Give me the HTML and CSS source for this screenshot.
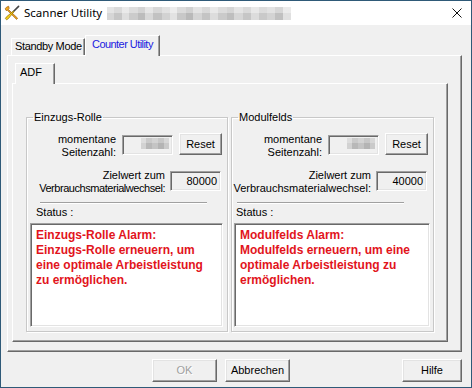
FILE: index.html
```html
<!DOCTYPE html>
<html>
<head>
<meta charset="utf-8">
<link rel="stylesheet" href="styles.css">
</head>
<body>
<div class="window">
  <div class="titlebar">
    <svg class="app-icon" width="16" height="16" viewBox="0 0 16 16">
      <path d="M2.5 2.2 L4.6 1.2 L5.2 3.3 L4.2 4.3 L13.6 13.2 L12.6 14.4 L3.3 5.2 L2.2 5.6 L1.2 3.8 Z" fill="#f2a81d" stroke="#9a5a08" stroke-width="0.7"/>
      <path d="M14.6 1.4 L9.2 6.8" stroke="#444" stroke-width="1.6" stroke-linecap="round"/>
      <path d="M9.4 6.1 L10 6.7 L4.4 13.6 L2.6 14.8 L1.4 13.6 L2.5 11.8 Z" fill="#f7d21c" stroke="#8c6a00" stroke-width="0.7"/>
    </svg>
    <span class="title">Scanner Utility</span>
    <span class="title-blur"></span>
    <svg class="close" width="10" height="10" viewBox="0 0 10 10">
      <path d="M0.5 0.5 L9.5 9.5 M9.5 0.5 L0.5 9.5" stroke="#111" stroke-width="1"/>
    </svg>
  </div>
  <div class="client">
    <div class="tabs outer-tabs">
      <div class="tab tab-standby">Standby Mode</div>
      <div class="tab tab-counter active">Counter Utility</div>
    </div>
    <div class="panel outer-panel">
      <div class="tabs inner-tabs">
        <div class="tab tab-adf active">ADF</div>
      </div>
      <div class="panel inner-panel">
        <fieldset class="group group-left">
          <legend>Einzugs-Rolle</legend>
          <div class="row row-count">
            <div class="labels">momentane<br>Seitenzahl:</div>
            <div class="field field-count"><span class="blur"></span></div>
            <div class="btn btn-reset">Reset</div>
          </div>
          <div class="row row-target">
            <div class="labels">Zielwert zum<br><span class="squeeze">Verbrauchsmaterialwechsel:</span></div>
            <div class="field field-target">80000</div>
          </div>
          <div class="separator"></div>
          <div class="status-label">Status :</div>
          <div class="status-box">Einzugs-Rolle Alarm:<br>Einzugs-Rolle erneuern, um<br>eine optimale Arbeistleistung<br>zu ermöglichen.</div>
        </fieldset>
        <fieldset class="group group-right">
          <legend>Modulfelds</legend>
          <div class="row row-count">
            <div class="labels">momentane<br>Seitenzahl:</div>
            <div class="field field-count"><span class="blur"></span></div>
            <div class="btn btn-reset">Reset</div>
          </div>
          <div class="row row-target">
            <div class="labels">Zielwert zum<br>Verbrauchsmaterialwechsel:</div>
            <div class="field field-target">40000</div>
          </div>
          <div class="separator"></div>
          <div class="status-label">Status :</div>
          <div class="status-box">Modulfelds Alarm:<br>Modulfelds erneuern, um eine<br>optimale Arbeistleistung zu<br>ermöglichen.</div>
        </fieldset>
      </div>
    </div>
    <div class="buttons">
      <div class="btn btn-dlg btn-ok disabled">OK</div>
      <div class="btn btn-dlg btn-cancel">Abbrechen</div>
      <div class="btn btn-dlg btn-help">Hilfe</div>
    </div>
  </div>
</div>
</body>
</html>
```
FILE: styles.css
```css
html, body {
  margin: 0;
  padding: 0;
}
body {
  width: 472px;
  height: 388px;
  overflow: hidden;
  font-family: "Liberation Sans", Arial, sans-serif;
  font-size: 11px;
  color: #000;
}
.window {
  box-sizing: border-box;
  width: 472px;
  height: 388px;
  border: 1px solid #2f5a78;
  background: #f0f0f0;
  display: flex;
  flex-direction: column;
}
.titlebar {
  height: 24px;
  flex: none;
  background: #fff;
  display: flex;
  align-items: center;
}
.app-icon {
  margin-left: 3px;
  flex: none;
}
.title {
  margin-left: 4px;
  font-family: "Noto Sans", sans-serif;
  font-size: 11.5px;
  line-height: 16px;
  color: #000;
}
.title-blur {
  width: 184px;
  height: 13px;
  margin-left: 5px;
  background:
    linear-gradient(180deg, rgba(255,255,255,0.35) 0 6px, rgba(255,255,255,0) 6px 13px),
    linear-gradient(90deg, #d6d6d6 0 7px, #c6c6c6 7px 15px, #dedede 15px 22px, #cbcbcb 22px 31px,
      #bcbcbc 31px 38px, #d8d8d8 38px 46px, #c2c2c2 46px 55px, #d2d2d2 55px 63px, #e2e2e2 63px 70px,
      #c8c8c8 70px 79px, #b9b9b9 79px 86px, #d4d4d4 86px 95px, #c4c4c4 95px 103px, #dcdcdc 103px 111px,
      #cacaca 111px 120px, #bebebe 120px 127px, #d6d6d6 127px 136px, #c6c6c6 136px 144px,
      #dcdcdc 144px 152px, #c9c9c9 152px 160px, #d3d3d3 160px 168px, #c0c0c0 168px 176px, #e0e0e0 176px 184px);
}
.close {
  margin-left: auto;
  margin-right: 9px;
}
.client {
  flex: 1;
  display: flex;
  flex-direction: column;
  padding: 10px 0 0 6px;
}

/* tabs */
.tabs {
  display: flex;
  align-items: flex-end;
  height: 20px;
  flex: none;
}
.tab {
  box-sizing: border-box;
  height: 17px;
  line-height: 13px;
  padding: 1px 0 0 3px;
  border-top: 1px solid #fff;
  border-left: 1px solid #fff;
  border-right: 1px solid #696969;
  box-shadow: inset -1px 0 #a0a0a0;
  background: #f0f0f0;
  white-space: nowrap;
}
.tab.active {
  height: 21px;
  margin-bottom: -1px;
  padding-top: 2px;
  position: relative;
  z-index: 1;
}
.outer-tabs {
  padding-left: 4px;
}
.tab-standby {
  width: 74px;
  letter-spacing: -0.35px;
}
.tab-counter {
  width: 75px;
  padding-left: 6px;
  color: #1a1ae0;
  letter-spacing: -0.55px;
}
.inner-tabs {
  padding-left: 3px;
}
.tab-adf {
  width: 40px;
  padding-left: 4px;
}

/* panels */
.panel {
  box-sizing: border-box;
  background: #f0f0f0;
  border-top: 1px solid #fff;
  border-left: 1px solid #fff;
  border-right: 1px solid #696969;
  border-bottom: 1px solid #696969;
  box-shadow: inset -1px -1px #a0a0a0;
}
.outer-panel {
  width: 455px;
  height: 297px;
  padding: 7px 0 0 4px;
  flex: none;
}
.inner-panel {
  width: 436px;
  height: 259px;
  display: flex;
  align-items: flex-start;
  gap: 3px;
  padding: 0 0 0 13px;
}

/* group boxes */
.group {
  box-sizing: border-box;
  margin: 26px 0 0 0;
  padding: 0 5px 2px 0;
  min-width: 0;
  border: 1px solid #c8c8c8;
  box-shadow: inset 1px 1px #fff, 1px 1px #fff;
  height: 222px;
  display: flex;
  flex-direction: column;
}
.group-left {
  width: 202px;
}
.group-right {
  width: 203px;
}
.group legend {
  margin-left: 6px;
  padding: 0 1px;
  line-height: 14px;
}
.row {
  display: flex;
  justify-content: flex-end;
  align-items: flex-start;
}
.labels {
  text-align: right;
  line-height: 13px;
  white-space: nowrap;
}
.row-count {
  margin-top: 9px;
}
.row-target {
  margin-top: 10px;
  padding-right: 1px;
}
.squeeze {
  letter-spacing: -0.45px;
}
.field {
  box-sizing: border-box;
  height: 20px;
  margin-top: 2px;
  border-top: 1px solid #a0a0a0;
  border-left: 1px solid #a0a0a0;
  border-right: 1px solid #fff;
  border-bottom: 1px solid #fff;
  box-shadow: inset 1px 1px #696969, inset -1px -1px #e3e3e3;
  background: #f0f0f0;
}
.field-count {
  width: 51px;
  margin-left: 6px;
  display: flex;
  justify-content: flex-end;
  align-items: flex-start;
  padding: 2px 3px 0 0;
}
.blur {
  width: 28px;
  height: 11px;
  background:
    linear-gradient(180deg, rgba(255,255,255,0.25) 0 5px, rgba(255,255,255,0) 5px 11px),
    linear-gradient(90deg, #d2d2d2 0 5px, #b8b8b8 5px 11px, #c4c4c4 11px 17px, #b4b4b4 17px 23px, #cacaca 23px 28px);
}
.field-target {
  width: 51px;
  margin-left: 5px;
  text-align: right;
  padding: 0 3px 0 0;
  line-height: 18px;
}
.btn {
  box-sizing: border-box;
  border-top: 1px solid #fff;
  border-left: 1px solid #fff;
  border-right: 1px solid #696969;
  border-bottom: 1px solid #696969;
  box-shadow: inset -1px -1px #a0a0a0, inset 1px 1px #e3e3e3;
  background: #f0f0f0;
  text-align: center;
}
.btn-reset {
  width: 43px;
  height: 22px;
  margin-left: 6px;
  line-height: 20px;
}
.separator {
  height: 1px;
  background: #a0a0a0;
  border-bottom: 1px solid #fff;
  margin-top: 7px;
  width: 167px;
}
.group-left .separator {
  margin-left: 13px;
}
.group-right .separator {
  margin-left: 5px;
}
.status-label {
  line-height: 13px;
  margin-top: 2px;
}
.group-left .status-label {
  margin-left: 9px;
}
.group-right .status-label {
  margin-left: 4px;
}
.status-box {
  box-sizing: border-box;
  margin-top: 4px;
  height: 104px;
  background: #fff;
  border-top: 1px solid #a0a0a0;
  border-left: 1px solid #a0a0a0;
  border-right: 1px solid #fff;
  border-bottom: 1px solid #fff;
  box-shadow: inset 1px 1px #696969, inset -1px -1px #e3e3e3;
  padding: 4px 2px 0 5px;
  color: #e2141c;
  font-weight: bold;
  font-size: 12px;
  line-height: 15px;
  white-space: nowrap;
}
.group-left .status-box {
  margin-left: 3px;
  width: 193px;
}
.group-right .status-box {
  margin-left: 2px;
  width: 196px;
}

/* dialog buttons */
.buttons {
  display: flex;
  margin-top: 7px;
  margin-left: -6px;
  height: 23px;
}
.btn-dlg {
  height: 23px;
  line-height: 21px;
}
.btn-ok {
  width: 65px;
  margin-left: 151px;
}
.btn-ok.disabled {
  color: #a0a0a0;
  text-shadow: 1px 1px #fff;
}
.btn-cancel {
  width: 65px;
  margin-left: 8px;
}
.btn-help {
  width: 60px;
  margin-left: auto;
  margin-right: 9px;
}
```
